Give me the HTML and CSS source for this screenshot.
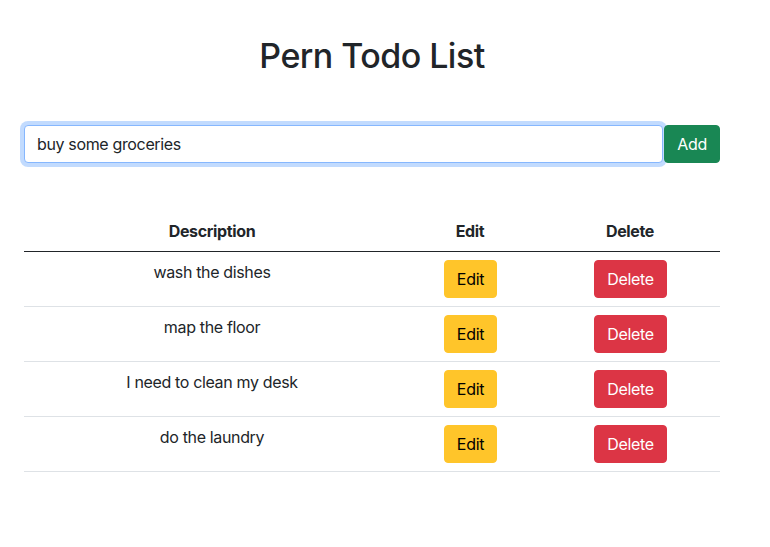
FILE: index.html
```html
<!DOCTYPE html>
<html>
<head>
<meta charset="utf-8">
<link rel="stylesheet" href="styles.css">
</head>
<body>
<div class="container">
  <h1 class="title">Pern Todo List</h1>
  <form class="add-form">
    <input class="text-input" type="text" value="buy some groceries">
    <button type="button" class="btn btn-success">Add</button>
  </form>
  <table class="todo-table">
    <thead>
      <tr>
        <th class="col-desc">Description</th>
        <th class="col-edit">Edit</th>
        <th class="col-del">Delete</th>
      </tr>
    </thead>
    <tbody>
      <tr>
        <td>wash the dishes</td>
        <td><button type="button" class="btn btn-warning">Edit</button></td>
        <td><button type="button" class="btn btn-danger">Delete</button></td>
      </tr>
      <tr>
        <td>map the floor</td>
        <td><button type="button" class="btn btn-warning">Edit</button></td>
        <td><button type="button" class="btn btn-danger">Delete</button></td>
      </tr>
      <tr>
        <td>I need to clean my desk</td>
        <td><button type="button" class="btn btn-warning">Edit</button></td>
        <td><button type="button" class="btn btn-danger">Delete</button></td>
      </tr>
      <tr>
        <td>do the laundry</td>
        <td><button type="button" class="btn btn-warning">Edit</button></td>
        <td><button type="button" class="btn btn-danger">Delete</button></td>
      </tr>
    </tbody>
  </table>
</div>
</body>
</html>
```

FILE: styles.css
```css
* { box-sizing: border-box; }
html, body {
  margin: 0;
  padding: 0;
  background: #fff;
}
body {
  font-family: Inter, "Noto Sans", "Liberation Sans", sans-serif;
  font-size: 16px;
  line-height: 1.5;
  color: #212529;
  letter-spacing: -0.35px;
}
.container {
  width: 696px;
  margin-left: 24px;
  padding-top: 32px;
}
.title {
  margin: 0;
  font-size: 34px;
  font-weight: 500;
  line-height: 48px;
  text-align: center;
  letter-spacing: -0.55px;
}
.add-form {
  display: flex;
  margin-top: 45px;
}
.text-input {
  flex: 1;
  height: 38px;
  padding: 6px 12px;
  font-family: inherit;
  font-size: 16px;
  letter-spacing: -0.35px;
  color: #212529;
  border: 1px solid #86b7fe;
  border-radius: 4px;
  box-shadow: 0 0 0 4px rgba(13, 110, 253, 0.25);
  outline: none;
}
.btn {
  display: inline-block;
  height: 38px;
  padding: 6px 12px;
  font-family: inherit;
  font-size: 16px;
  letter-spacing: -0.3px;
  line-height: 24px;
  border: 1px solid transparent;
  border-radius: 4px;
  cursor: pointer;
}
.add-form .btn { margin-left: 1px; }
.todo-table .btn { margin-left: 1px; }
.btn-success { background: #198754; border-color: #198754; color: #fff; }
.btn-warning { background: #ffc52a; border-color: #ffc52a; color: #000; }
.btn-danger { background: #dc3545; border-color: #dc3545; color: #fff; }
.todo-table {
  width: 100%;
  margin-top: 48px;
  border-collapse: collapse;
  text-align: center;
}
.todo-table th,
.todo-table td {
  padding: 8px;
  vertical-align: top;
  border-bottom: 1px solid #dee2e6;
}
.todo-table th {
  font-weight: 700;
  border-bottom-color: #212529;
}
.col-desc { width: 376px; }
.col-edit { width: 140px; }
.col-del { width: 180px; }
```
